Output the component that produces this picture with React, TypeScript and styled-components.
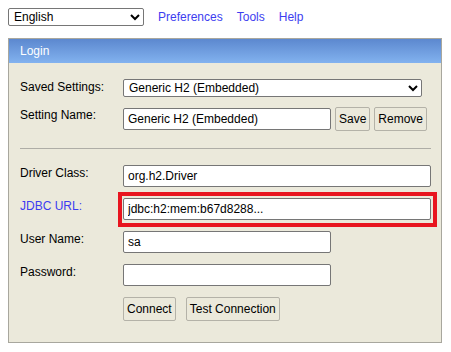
import * as React from "react";
import styled, { createGlobalStyle } from "styled-components";

const GlobalStyle = createGlobalStyle`
  body {
    margin: 0;
    background: #ffffff;
    font-family: "Liberation Sans", Arial, sans-serif;
    font-size: 12px;
    color: #000000;
  }
`;

export default function App() {
  return (
    <Page>
      <GlobalStyle />
      <TopBar>
        <LanguageSelect defaultValue="en">
          <option value="en">English</option>
        </LanguageSelect>
        <NavLink href="#">Preferences</NavLink>
        <NavLink href="#">Tools</NavLink>
        <NavLink href="#">Help</NavLink>
      </TopBar>
      <Panel>
        <PanelHeader>Login</PanelHeader>
        <PanelBody>
          <Section>
            <Label>Saved Settings:</Label>
            <SettingsSelect defaultValue="h2">
              <option value="h2">Generic H2 (Embedded)</option>
            </SettingsSelect>
            <Label>Setting Name:</Label>
            <InlineGroup>
              <TextInput $wide={false} defaultValue="Generic H2 (Embedded)" />
              <Button>Save</Button>
              <Button>Remove</Button>
            </InlineGroup>
          </Section>
          <Divider />
          <Section>
            <Label>Driver Class:</Label>
            <TextInput $wide defaultValue="org.h2.Driver" />
            <Label $highlight>JDBC URL:</Label>
            <Marked>
              <TextInput $wide defaultValue="jdbc:h2:mem:b67d8288..." />
            </Marked>
            <Label>User Name:</Label>
            <TextInput $wide={false} defaultValue="sa" />
            <Label>Password:</Label>
            <TextInput $wide={false} type="password" />
            <span />
            <ButtonRow>
              <Button>Connect</Button>
              <Button>Test Connection</Button>
            </ButtonRow>
          </Section>
        </PanelBody>
      </Panel>
    </Page>
  );
}

const Page = styled.div`
  padding: 8px;
`;

const TopBar = styled.div`
  display: flex;
  align-items: center;
  gap: 14px;
  height: 18px;
`;

const LanguageSelect = styled.select`
  width: 136px;
  height: 18px;
  font-family: "Liberation Sans", Arial, sans-serif;
  font-size: 12px;
  color: #000;
  background: #fff;
  border: 1px solid #767676;
  border-radius: 2px;
  padding: 0 0 0 1px;
`;

const NavLink = styled.a`
  color: #3d3df0;
  text-decoration: none;
  font-size: 12px;
`;

const Panel = styled.div`
  margin-top: 12px;
  width: 434px;
  box-sizing: border-box;
  border: 1px solid #a8a79e;
  background: #ebe9db;
`;

const PanelHeader = styled.div`
  height: 24px;
  line-height: 24px;
  padding-left: 11px;
  color: #ffffff;
  background: linear-gradient(#5c88cf, #82b2ef);
`;

const PanelBody = styled.div`
  padding: 16px 10px 21px 11px;
`;

const Section = styled.div`
  display: grid;
  grid-template-columns: 103px auto;
  row-gap: 11px;
  justify-items: start;
  &:first-child {
    row-gap: 10px;
  }
`;

const Label = styled.div<{ $highlight?: boolean }>`
  padding-top: 1px;
  line-height: 14px;
  color: ${(p) => (p.$highlight ? "#3d3df0" : "#000")};
`;

const SettingsSelect = styled(LanguageSelect)`
  width: 299px;
`;

const InlineGroup = styled.div`
  display: flex;
  align-items: center;
  gap: 4px;
`;

const TextInput = styled.input<{ $wide: boolean }>`
  box-sizing: border-box;
  width: ${(p) => (p.$wide ? "308px" : "208px")};
  height: 22px;
  margin: 0;
  padding: 0 4px;
  font-family: "Liberation Sans", Arial, sans-serif;
  font-size: 12px;
  color: #000;
  background: #fff;
  border: 1px solid #767676;
  border-radius: 2px;
`;

const Button = styled.button`
  box-sizing: border-box;
  height: 24px;
  margin: 0;
  padding: 0 3px;
  font-family: "Liberation Sans", Arial, sans-serif;
  font-size: 12px;
  color: #000;
  background: #ebe9db;
  border: 1px solid #b4b2a8;
  border-radius: 2px;
`;

const ButtonRow = styled.div`
  display: flex;
  gap: 10px;
`;

const Divider = styled.hr`
  margin: 17px 0 16px;
  border: none;
  border-top: 1px solid #aeada6;
  width: 411px;
`;

const Marked = styled.div`
  position: relative;
  display: flex;
  &::after {
    content: "";
    position: absolute;
    left: -5px;
    top: -6px;
    right: -6px;
    bottom: -7px;
    border: 4px solid #e8151f;
    pointer-events: none;
  }
`;
